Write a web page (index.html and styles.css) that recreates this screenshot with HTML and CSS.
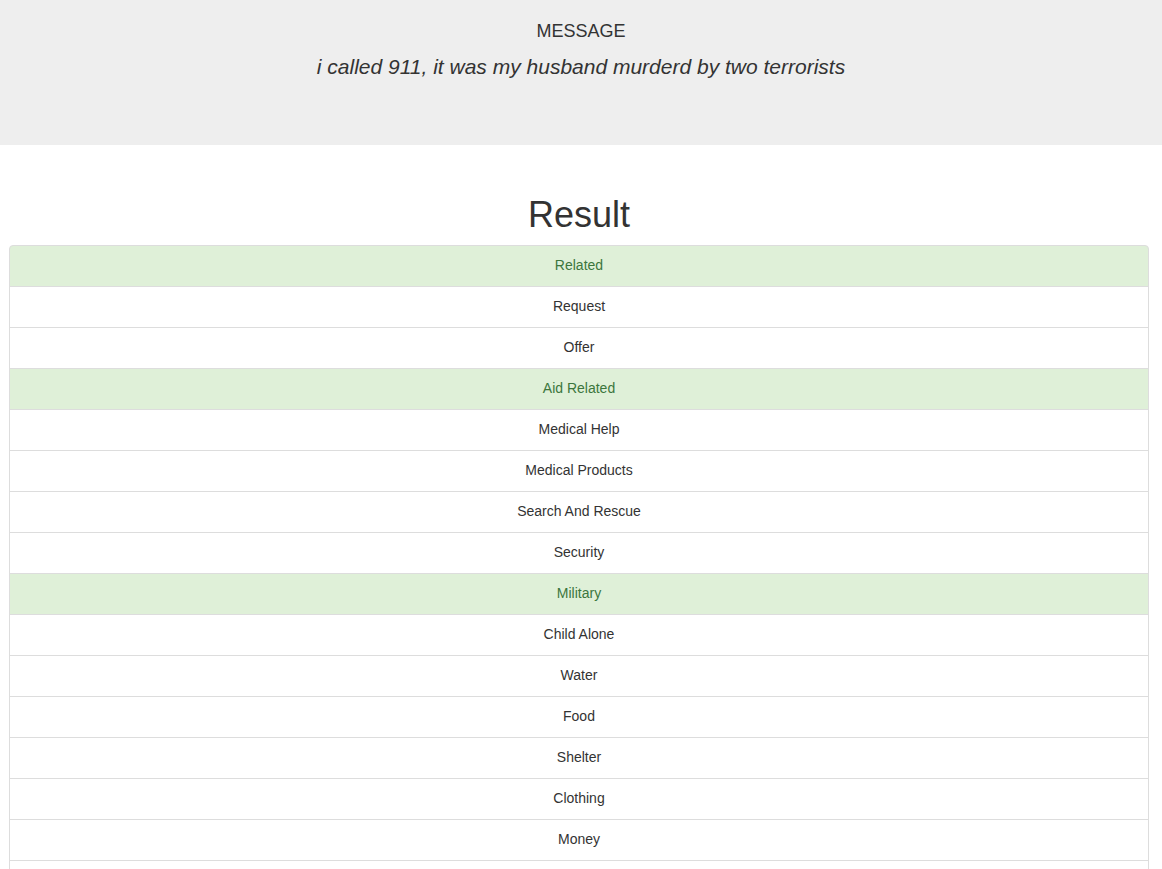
FILE: index.html
```html
<!DOCTYPE html>
<html lang="en">
<head>
<meta charset="utf-8">
<title>Disaster Response</title>
<link rel="stylesheet" href="styles.css">
</head>
<body>
<div class="jumbotron">
  <h4 class="label">MESSAGE</h4>
  <p class="message">i called 911, it was my husband murderd by two terrorists</p>
</div>
<div class="content">
  <h1 class="title">Result</h1>
  <ul class="list-group">
    <li class="item success">Related</li>
    <li class="item">Request</li>
    <li class="item">Offer</li>
    <li class="item success">Aid Related</li>
    <li class="item">Medical Help</li>
    <li class="item">Medical Products</li>
    <li class="item">Search And Rescue</li>
    <li class="item">Security</li>
    <li class="item success">Military</li>
    <li class="item">Child Alone</li>
    <li class="item">Water</li>
    <li class="item">Food</li>
    <li class="item">Shelter</li>
    <li class="item">Clothing</li>
    <li class="item">Money</li>
    <li class="item">Missing People</li>
    <li class="item">Refugees</li>
    <li class="item">Death</li>
    <li class="item">Other Aid</li>
  </ul>
</div>
</body>
</html>
```
FILE: styles.css
```css
html, body {
  margin: 0;
  padding: 0;
}
body {
  font-family: "Liberation Sans", Arial, Helvetica, sans-serif;
  font-size: 14px;
  line-height: 1.42857;
  color: #333;
  background: #fff;
}
.jumbotron {
  background: #eee;
  padding: 22px 15px 64px;
  margin-bottom: 30px;
  text-align: center;
}
.label {
  margin: 0 0 10px;
  font-size: 18px;
  font-weight: 500;
  line-height: 1.1;
}
.message {
  margin: 0;
  font-size: 21px;
  font-weight: 200;
  font-style: italic;
  line-height: 1.4;
}
.content {
  padding: 0 13px 0 9px;
}
.title {
  margin: 50px 0 10px;
  font-size: 36px;
  font-weight: 500;
  line-height: 1.1;
  text-align: center;
}
.list-group {
  list-style: none;
  margin: 0 0 20px;
  padding: 0;
}
.item {
  padding: 10px 15px;
  margin-bottom: -1px;
  border: 1px solid #ddd;
  background: #fff;
  text-align: center;
}
.item:first-child {
  border-top-left-radius: 4px;
  border-top-right-radius: 4px;
}
.item:last-child {
  border-bottom-left-radius: 4px;
  border-bottom-right-radius: 4px;
}
.item.success {
  background: #dff0d8;
  color: #3c763d;
}
```
